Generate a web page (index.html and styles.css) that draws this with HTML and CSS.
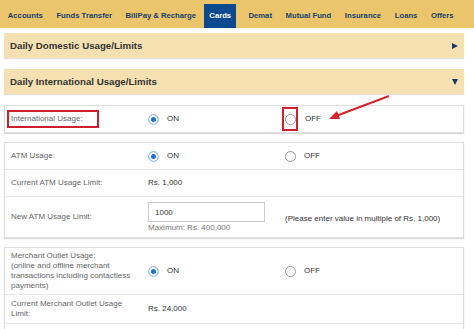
FILE: index.html
```html
<!DOCTYPE html>
<html lang="en">
<head>
    <meta charset="UTF-8">
    <meta name="viewport" content="width=device-width, initial-scale=1.0">
    <title>Cards - Usage Limits</title>
    <link rel="stylesheet" href="styles.css">
</head>
<body>
    <nav class="tabs">
        <a>Accounts</a>
        <a>Funds Transfer</a>
        <a>BillPay &amp; Recharge</a>
        <a class="active">Cards</a>
        <a>Demat</a>
        <a>Mutual Fund</a>
        <a>Insurance</a>
        <a>Loans</a>
        <a>Offers</a>
    </nav>

    <div class="content">
        <div class="panel-head">
            <span>Daily Domestic Usage/Limits</span>
            <span class="caret caret-right"></span>
        </div>

        <div class="panel-head">
            <span>Daily International Usage/Limits</span>
            <span class="caret caret-down"></span>
        </div>

        <div class="box">
            <div class="row">
                <div class="label"><span class="callout">International Usage:</span></div>
                <div class="opt"><span class="radio checked"></span>ON</div>
                <div class="opt"><span class="callout-radio"><span class="radio"></span></span>OFF</div>
            </div>
        </div>

        <div class="box">
            <div class="row">
                <div class="label">ATM Usage:</div>
                <div class="opt"><span class="radio checked"></span>ON</div>
                <div class="opt"><span class="radio"></span>OFF</div>
            </div>
            <div class="row">
                <div class="label">Current ATM Usage Limit:</div>
                <div class="value">Rs. 1,000</div>
                <div></div>
            </div>
            <div class="row row-input">
                <div class="label">New ATM Usage Limit:</div>
                <div class="value">
                    <input class="amount" type="text" value="1000">
                    <div class="hint">Maximum: Rs. 400,000</div>
                </div>
                <div class="note">(Please enter value in multiple of Rs. 1,000)</div>
            </div>
        </div>

        <div class="box">
            <div class="row row-tall">
                <div class="label">Merchant Outlet Usage:<br>(online and offline merchant<br>transactions including contactless<br>payments)</div>
                <div class="opt"><span class="radio checked"></span>ON</div>
                <div class="opt"><span class="radio"></span>OFF</div>
            </div>
            <div class="row row-two">
                <div class="label">Current Merchant Outlet Usage<br>Limit:</div>
                <div class="value">Rs. 24,000</div>
                <div></div>
            </div>
            <div class="row row-input"></div>
        </div>
    </div>

    <!-- annotation arrow drawn on top of the screenshot -->
    <svg class="annot" width="474" height="329" viewBox="0 0 474 329">
        <line x1="389" y1="96" x2="336" y2="116" stroke="#d8232a" stroke-width="2"/>
        <polygon points="329,119 337,111 340,119" fill="#d8232a"/>
    </svg>
</body>
</html>
```

FILE: styles.css
```css
body {
    margin: 0;
    font-family: "Liberation Sans", Arial, sans-serif;
    background-color: #fff;
    position: relative;
    overflow: hidden;
}

/* barra de pestañas */
.tabs {
    display: flex;
    align-items: flex-end;
    height: 28px;
    padding-left: 1px;
    background-color: #eac56c;
}

.tabs a {
    height: 24px;
    line-height: 23px;
    padding: 0 6.8px;
    font-size: 7.7px;
    font-weight: bold;
    color: #203e69;
}

.tabs a.active {
    padding: 0 4.5px 0 5px;
    margin: 0 6px 0 1.5px;
    background-color: #0b4a8e;
    color: #fff;
}

.content {
    padding: 5px 10px 0 4px;
}

.panel-head {
    display: flex;
    justify-content: space-between;
    align-items: center;
    height: 25px;
    padding: 0 6px;
    margin-bottom: 11px;
    background-color: #f4e0b0;
    box-shadow: 0 1px 1px rgba(0, 0, 0, 0.12);
    font-size: 9.7px;
    font-weight: bold;
    color: #333;
}

.caret {
    width: 0;
    height: 0;
}

.caret-right {
    border-left: 6px solid #1c3a68;
    border-top: 3px solid transparent;
    border-bottom: 3px solid transparent;
}

.caret-down {
    border-top: 6px solid #1c3a68;
    border-left: 3.5px solid transparent;
    border-right: 3.5px solid transparent;
}

.box {
    border: 1px solid #dddddd;
    box-shadow: 0 1px 1px rgba(0, 0, 0, 0.15);
    margin-bottom: 9px;
}

.row {
    display: grid;
    grid-template-columns: 137px 137px 1fr;
    align-items: center;
    min-height: 26px;
    padding-left: 6px;
    font-size: 8px;
    line-height: 10px;
    color: #333;
}

.row + .row {
    border-top: 1px solid #e6e6e6;
}

.row-input {
    min-height: 40px;
}

.row-tall {
    min-height: 46px;
}

.row-two {
    min-height: 28px;
}

.label {
    color: #666;
}

.opt {
    display: flex;
    align-items: center;
    gap: 8px;
}

.radio {
    display: inline-block;
    box-sizing: border-box;
    width: 11px;
    height: 11px;
    border: 1px solid #9a9a9a;
    border-radius: 50%;
    background-color: #fff;
}

.radio.checked {
    border-color: #a9c6f2;
    background-color: #1b6fe0;
    box-shadow: inset 0 0 0 2px #fff;
}

/* marcas rojas */
.callout {
    display: inline-block;
    margin-left: -4px;
    padding: 0 14px 0 2px;
    line-height: 14px;
    border: 2px solid #d01f2c;
}

.callout-radio {
    display: inline-flex;
    margin-left: -3px;
    margin-right: -1px;
    padding: 5px 0 4px 1px;
    border: 2px solid #d01f2c;
}

.amount {
    display: block;
    box-sizing: border-box;
    width: 117px;
    height: 20px;
    margin: 0;
    padding: 0 6px;
    border: 1px solid #cccccc;
    font-family: "Liberation Sans", Arial, sans-serif;
    font-size: 8px;
    color: #333;
}

.hint {
    margin-top: 1px;
    color: #777;
}

.row-input .value {
    padding: 4px 0 3px;
}

.note {
    padding-top: 4px;
}

.annot {
    position: absolute;
    left: 0;
    top: 0;
    pointer-events: none;
}
```
